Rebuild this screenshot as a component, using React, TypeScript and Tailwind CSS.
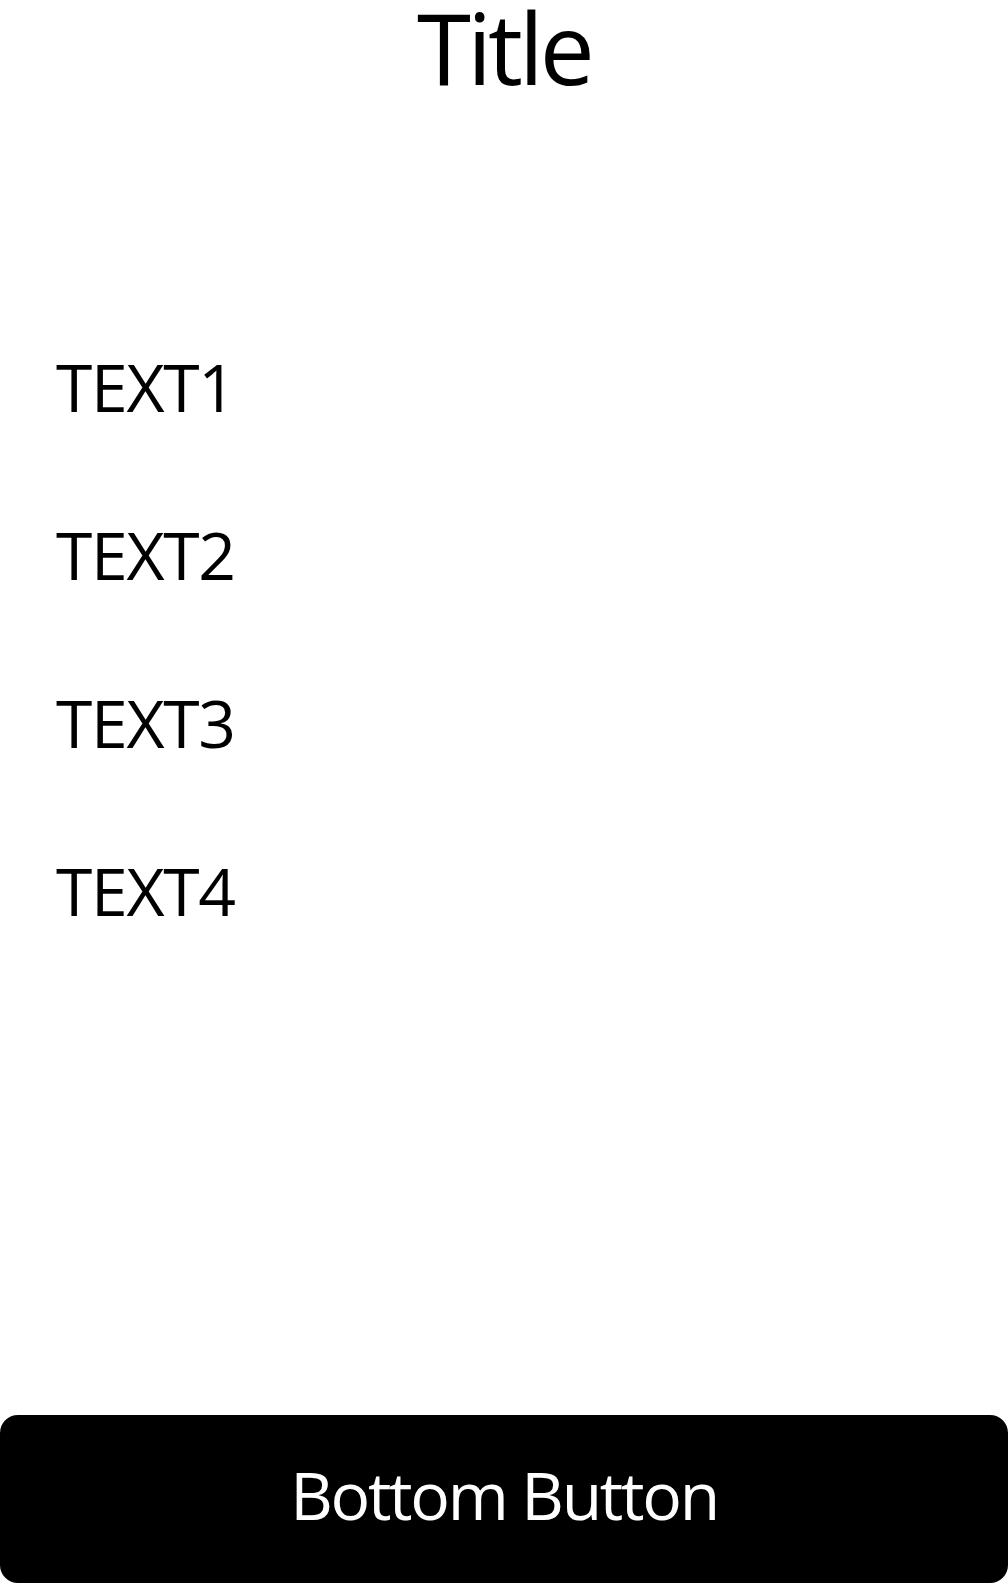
const rows = ["TEXT1", "TEXT2", "TEXT3", "TEXT4"];

export default function App() {
    return (
        <div className="flex flex-col h-[1583px] w-full bg-white text-black font-['Open_Sans',sans-serif]">

            <h1 className="text-center text-[98px] leading-[94px] font-normal tracking-[-0.04em]">Title</h1>

            <div className="flex flex-col gap-[102px] pt-[259px] pl-[56px]">
                {rows.map((row) => (
                    <p key={row} className="text-[66px] leading-[66px] tracking-[-0.02em]">{row}</p>
                ))}
            </div>

            <div className="mt-auto flex h-[168px] w-full items-center justify-center pb-[11px] rounded-[18px] bg-black text-white text-[66px] leading-[66px] tracking-[-0.035em]">
                Bottom Button
            </div>

        </div>
    );
}
